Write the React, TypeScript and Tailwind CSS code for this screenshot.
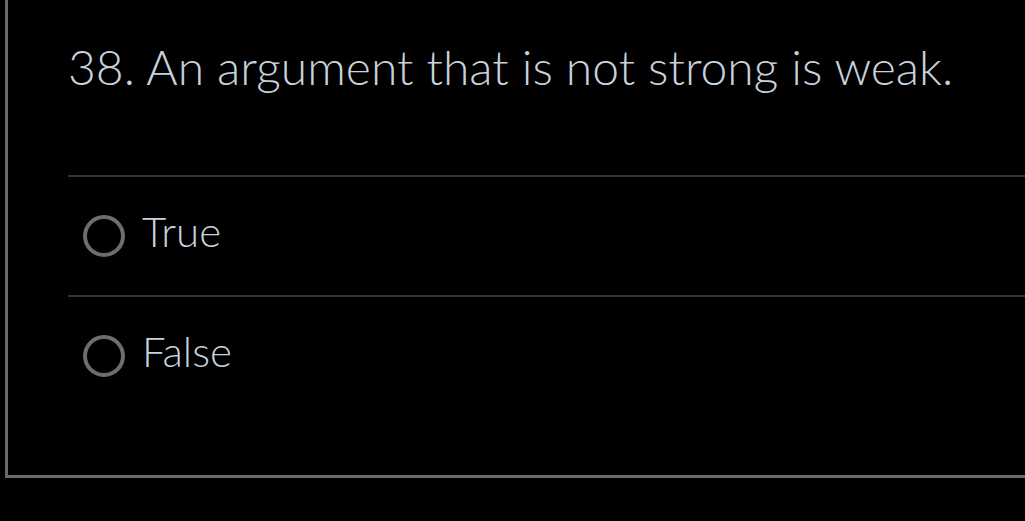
import React from "react";

function Radio() {
  return (
    <span className="block w-[42px] h-[42px] rounded-full border-[4px] border-[#6d6d6d] shrink-0" />
  );
}

function Option({ label }: { label: string }) {
  return (
    <div className="border-t-2 border-[#333333] h-[120px] flex items-center pl-[15px]">
      <Radio />
      <span className="ml-[17px] text-[42px] leading-[1.2] text-[#c7d2dd] pb-[9px] font-light">
        {label}
      </span>
    </div>
  );
}

export default function App() {
  return (
    <div
      className="w-[1025px] h-[521px] bg-black overflow-hidden"
      style={{ fontFamily: "Lato, 'Open Sans', sans-serif" }}
    >
      <div className="ml-[5px] w-[1100px] h-[478px] border-l-[3px] border-b-[3px] border-[#6a6a6a] pl-[60px]">
        <div className="pt-[38px] text-[48px] leading-[1.2] text-[#c7d2dd] font-light h-[175px]">
          38. An argument that is not strong is weak.
        </div>
        <Option label="True" />
        <Option label="False" />
      </div>
    </div>
  );
}
